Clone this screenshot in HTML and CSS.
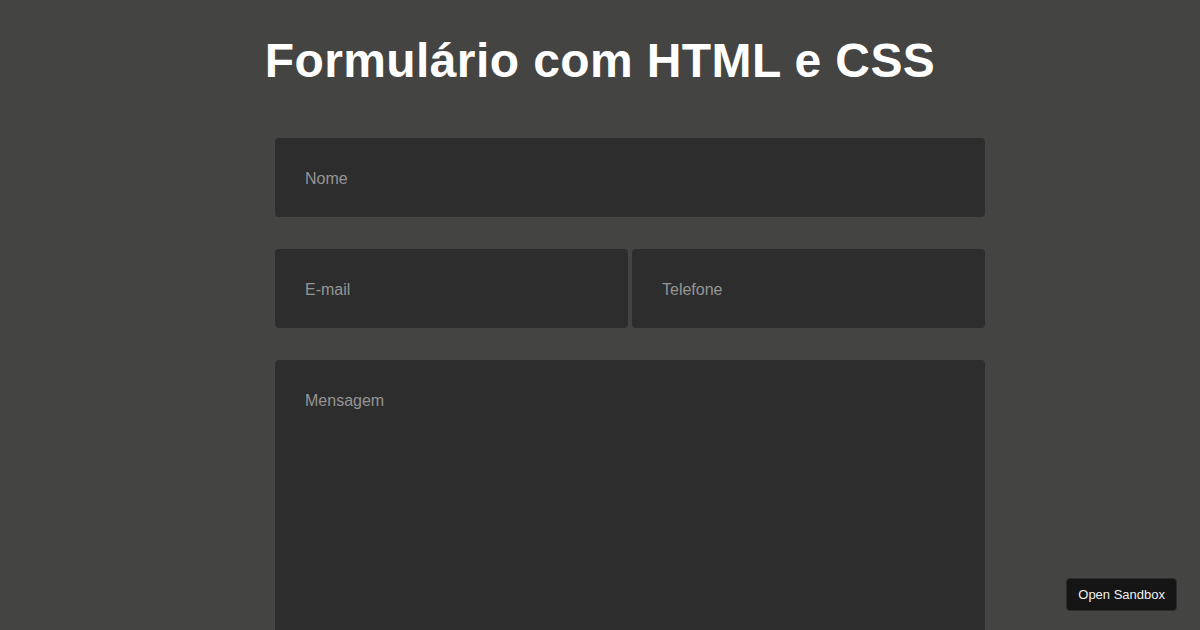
FILE: index.html
```html
<!DOCTYPE html>
<html lang="pt">
<head>
<meta charset="utf-8">
<title>Formulário com HTML e CSS</title>
<link rel="stylesheet" href="styles.css">
</head>
<body>
<main class="page">
  <h1 class="title">Formulário com HTML e CSS</h1>
  <form class="form">
    <input class="field" type="text" placeholder="Nome">
    <div class="row">
      <input class="field" type="email" placeholder="E-mail">
      <input class="field" type="tel" placeholder="Telefone">
    </div>
    <textarea class="field message" placeholder="Mensagem"></textarea>
  </form>
</main>
<a class="sandbox" href="#">Open Sandbox</a>
</body>
</html>
```
FILE: styles.css
```css
html, body {
  margin: 0;
  padding: 0;
  background: #444443;
  font-family: "Liberation Sans", Arial, sans-serif;
  overflow: hidden;
  height: 630px;
}
.page {
  display: flex;
  flex-direction: column;
}
.title {
  margin: 33px 0 0 0;
  text-align: center;
  color: #ffffff;
  font-size: 48px;
  font-weight: 700;
  letter-spacing: 0.4px;
  line-height: 56px;
}
.form {
  width: 710px;
  margin: 49px 0 0 275px;
  display: flex;
  flex-direction: column;
  gap: 32px;
}
.row {
  display: flex;
  gap: 4px;
}
.field {
  box-sizing: border-box;
  width: 100%;
  height: 79px;
  border: none;
  border-radius: 4px;
  background: #2d2d2d;
  color: #ddd;
  padding: 2px 30px 0;
  font-family: "Liberation Sans", Arial, sans-serif;
  font-size: 16px;
  outline: none;
}
.row .field {
  flex: 1;
  min-width: 0;
}
.field::placeholder {
  color: #959595;
}
.message {
  height: 300px;
  padding: 32px 30px;
  resize: none;
  display: block;
}
.sandbox {
  position: fixed;
  right: 23px;
  bottom: 19px;
  background: #151515;
  color: #f0f0f0;
  border: 1px solid #2c2c2c;
  border-radius: 4px;
  font-size: 13px;
  padding: 8px 11px;
  line-height: 15px;
  text-decoration: none;
}
```
